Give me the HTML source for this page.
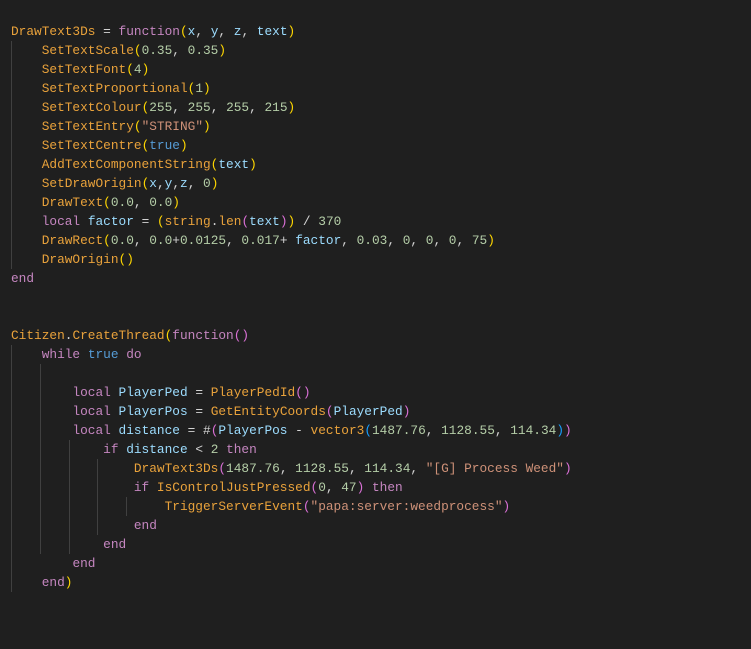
<!DOCTYPE html>
<html><head><style>
body{margin:0;background:#1f1f1f;width:751px;height:649px;overflow:hidden;position:relative}
pre{margin:0;position:absolute;left:11px;top:22px;font-family:"Liberation Mono",monospace;font-size:12.8px;line-height:19px;color:#d4d4d4}
.f{color:#e9a23b}.k{color:#c586c0}.v{color:#9cdcfe}.n{color:#b5cea8}.s{color:#ce9178}.b{color:#569cd6}
.y{color:#ffd700}.p{color:#da70d6}.c{color:#179fff}
.g{position:absolute;width:1px;background:#404040}
</style></head><body>
<div class="g" style="left:11px;top:41px;height:228px"></div>
<div class="g" style="left:11px;top:345px;height:247px"></div>
<div class="g" style="left:40px;top:364px;height:190px"></div>
<div class="g" style="left:69px;top:440px;height:114px"></div>
<div class="g" style="left:97px;top:459px;height:76px"></div>
<div class="g" style="left:126px;top:497px;height:19px"></div>
<pre><span class="f">DrawText3Ds</span> = <span class="k">function</span><span class="y">(</span><span class="v">x</span>, <span class="v">y</span>, <span class="v">z</span>, <span class="v">text</span><span class="y">)</span>
    <span class="f">SetTextScale</span><span class="y">(</span><span class="n">0.35</span>, <span class="n">0.35</span><span class="y">)</span>
    <span class="f">SetTextFont</span><span class="y">(</span><span class="n">4</span><span class="y">)</span>
    <span class="f">SetTextProportional</span><span class="y">(</span><span class="n">1</span><span class="y">)</span>
    <span class="f">SetTextColour</span><span class="y">(</span><span class="n">255</span>, <span class="n">255</span>, <span class="n">255</span>, <span class="n">215</span><span class="y">)</span>
    <span class="f">SetTextEntry</span><span class="y">(</span><span class="s">"STRING"</span><span class="y">)</span>
    <span class="f">SetTextCentre</span><span class="y">(</span><span class="b">true</span><span class="y">)</span>
    <span class="f">AddTextComponentString</span><span class="y">(</span><span class="v">text</span><span class="y">)</span>
    <span class="f">SetDrawOrigin</span><span class="y">(</span><span class="v">x</span>,<span class="v">y</span>,<span class="v">z</span>, <span class="n">0</span><span class="y">)</span>
    <span class="f">DrawText</span><span class="y">(</span><span class="n">0.0</span>, <span class="n">0.0</span><span class="y">)</span>
    <span class="k">local</span> <span class="v">factor</span> = <span class="y">(</span><span class="f">string</span>.<span class="f">len</span><span class="p">(</span><span class="v">text</span><span class="p">)</span><span class="y">)</span> / <span class="n">370</span>
    <span class="f">DrawRect</span><span class="y">(</span><span class="n">0.0</span>, <span class="n">0.0</span>+<span class="n">0.0125</span>, <span class="n">0.017</span>+ <span class="v">factor</span>, <span class="n">0.03</span>, <span class="n">0</span>, <span class="n">0</span>, <span class="n">0</span>, <span class="n">75</span><span class="y">)</span>
    <span class="f">DrawOrigin</span><span class="y">()</span>
<span class="k">end</span>


<span class="f">Citizen</span>.<span class="f">CreateThread</span><span class="y">(</span><span class="k">function</span><span class="p">()</span>
    <span class="k">while</span> <span class="b">true</span> <span class="k">do</span>

        <span class="k">local</span> <span class="v">PlayerPed</span> = <span class="f">PlayerPedId</span><span class="p">()</span>
        <span class="k">local</span> <span class="v">PlayerPos</span> = <span class="f">GetEntityCoords</span><span class="p">(</span><span class="v">PlayerPed</span><span class="p">)</span>
        <span class="k">local</span> <span class="v">distance</span> = #<span class="p">(</span><span class="v">PlayerPos</span> - <span class="f">vector3</span><span class="c">(</span><span class="n">1487.76</span>, <span class="n">1128.55</span>, <span class="n">114.34</span><span class="c">)</span><span class="p">)</span>
            <span class="k">if</span> <span class="v">distance</span> &lt; <span class="n">2</span> <span class="k">then</span>
                <span class="f">DrawText3Ds</span><span class="p">(</span><span class="n">1487.76</span>, <span class="n">1128.55</span>, <span class="n">114.34</span>, <span class="s">"[G] Process Weed"</span><span class="p">)</span>
                <span class="k">if</span> <span class="f">IsControlJustPressed</span><span class="p">(</span><span class="n">0</span>, <span class="n">47</span><span class="p">)</span> <span class="k">then</span>
                    <span class="f">TriggerServerEvent</span><span class="p">(</span><span class="s">"papa:server:weedprocess"</span><span class="p">)</span>
                <span class="k">end</span>
            <span class="k">end</span>
        <span class="k">end</span>
    <span class="k">end</span><span class="y">)</span>
</pre>
</body></html>
